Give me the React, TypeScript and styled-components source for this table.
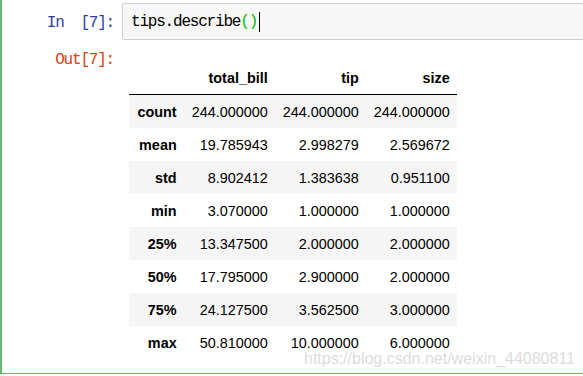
import styled, { createGlobalStyle } from 'styled-components'

const GlobalStyle = createGlobalStyle`
  html, body {
    margin: 0;
    padding: 0;
    background: #ffffff;
    overflow: hidden;
  }
`

const COLUMNS = ['total_bill', 'tip', 'size']

const ROWS: [string, string[]][] = [
  ['count', ['244.000000', '244.000000', '244.000000']],
  ['mean', ['19.785943', '2.998279', '2.569672']],
  ['std', ['8.902412', '1.383638', '0.951100']],
  ['min', ['3.070000', '1.000000', '1.000000']],
  ['25%', ['13.347500', '2.000000', '2.000000']],
  ['50%', ['17.795000', '2.900000', '2.000000']],
  ['75%', ['24.127500', '3.562500', '3.000000']],
  ['max', ['50.810000', '10.000000', '6.000000']],
]

export default function App() {
  return (
    <>
      <GlobalStyle />
      <Cell>
        <InputRow>
          <Prompt $kind="in">{'In  [7]:'}</Prompt>
          <InputBox>
            tips.describe<Bracket>()</Bracket>
            <Cursor />
          </InputBox>
        </InputRow>
        <OutputRow>
          <Prompt $kind="out">Out[7]:</Prompt>
          <OutputArea>
            <DataFrame>
              <thead>
                <tr>
                  <th />
                  {COLUMNS.map((col) => (
                    <th key={col}>{col}</th>
                  ))}
                </tr>
              </thead>
              <tbody>
                {ROWS.map(([label, values]) => (
                  <tr key={label}>
                    <th>{label}</th>
                    {values.map((v, i) => (
                      <td key={i}>{v}</td>
                    ))}
                  </tr>
                ))}
              </tbody>
            </DataFrame>
          </OutputArea>
        </OutputRow>
        <Watermark>https://blog.csdn.net/weixin_44080811</Watermark>
      </Cell>
    </>
  )
}

const Cell = styled.div`
  position: relative;
  box-sizing: border-box;
  width: 583px;
  height: 374px;
  padding-top: 3px;
  border-left: 2px solid #66bb6a;
  border-bottom: 1px solid #66bb6a;
  overflow: hidden;
`

const InputRow = styled.div`
  display: flex;
  align-items: flex-start;
`

const OutputRow = styled.div`
  display: flex;
  align-items: flex-start;
  margin-top: 8px;
`

const Prompt = styled.div<{ $kind: 'in' | 'out' }>`
  flex: 0 0 120px;
  box-sizing: border-box;
  padding-right: 8px;
  padding-top: ${({ $kind }) => ($kind === 'in' ? '10px' : '2px')};
  text-align: right;
  white-space: pre;
  font-family: 'Liberation Mono', monospace;
  font-size: 16px;
  letter-spacing: -1.2px;
  line-height: 20px;
  color: ${({ $kind }) => ($kind === 'in' ? '#303f9f' : '#d84315')};
`

const InputBox = styled.div`
  flex: 1;
  display: flex;
  align-items: center;
  box-sizing: border-box;
  height: 37px;
  margin-right: -10px;
  padding-left: 8px;
  border: 1px solid #cfcfcf;
  border-radius: 2px;
  background: #f7f7f7;
  font-family: 'Liberation Mono', monospace;
  font-size: 16px;
  letter-spacing: -1.2px;
  color: #000000;
  white-space: pre;
`

const Bracket = styled.span`
  color: #0b0;
`

const Cursor = styled.span`
  display: inline-block;
  width: 1px;
  height: 20px;
  margin-left: 2px;
  background: #000000;
`

const OutputArea = styled.div`
  padding-left: 7px;
  padding-top: 13px;
`

const DataFrame = styled.table`
  border-collapse: collapse;
  border-spacing: 0;
  font-family: 'Liberation Sans', Arial, sans-serif;
  font-size: 14.4px;
  color: #000000;

  th,
  td {
    height: 33px;
    padding: 0 7.5px;
    text-align: right;
    vertical-align: middle;
    white-space: nowrap;
  }

  th {
    font-weight: bold;
  }

  thead th {
    border-bottom: 1px solid #000000;
  }

  tbody tr:nth-child(odd) {
    background: #f5f5f5;
  }

  tbody th {
    padding-left: 8.5px;
  }
`

const Watermark = styled.div`
  position: absolute;
  right: 8px;
  top: 350px;
  font-family: 'Liberation Sans', Arial, sans-serif;
  font-size: 16px;
  color: #dcdcdc;
  white-space: nowrap;
  pointer-events: none;
`
